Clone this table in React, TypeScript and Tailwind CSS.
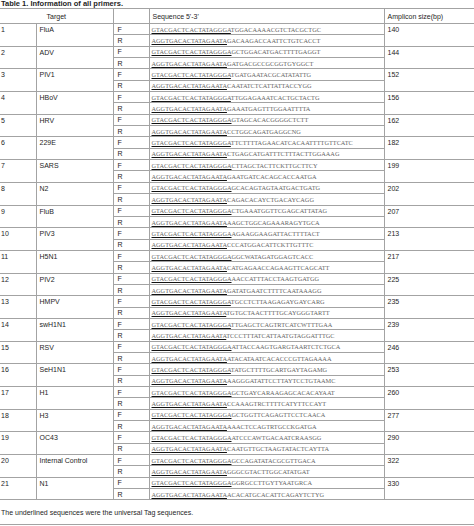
type Row = [string, string, string, string, string];

const rows: Row[] = [
  ["1", "FluA", "GTACGACTCACTATAGGGATGGACAAAACGTCTACGCTGC", "AGGTGACACTATAGAATAGACAAGACCAATTCTGTCACCT", "140"],
  ["2", "ADV", "GTACGACTCACTATAGGGAGCTGGACATGACTTTTGAGGT", "AGGTGACACTATAGAATAGATGACGCCGCGGTGYGGCT", "144"],
  ["3", "PIV1", "GTACGACTCACTATAGGGATGATGAATACGCATATATTG", "AGGTGACACTATAGAATACAATATCTCATTATTACCYGG", "152"],
  ["4", "HBoV", "GTACGACTCACTATAGGGATTGGAGAAATCACTGCTACTG", "AGGTGACACTATAGAATAGAAATGAGTTTGGAATTTTA", "156"],
  ["5", "HRV", "GTACGACTCACTATAGGGAGTAGCACACGGGGCTCTT", "AGGTGACACTATAGAATACCTGGCAGATGAGGCNG", "162"],
  ["6", "229E", "GTACGACTCACTATAGGGATTCTTTTAGAACATCACAATTTTGTTCATC", "AGGTGACACTATAGAATACTGAGCATGATTTCTTTACTTGGAAAG", "182"],
  ["7", "SARS", "GTACGACTCACTATAGGGACTTAGCTACTTCKTTGCTTCY", "AGGTGACACTATAGAATAGAATGATCACAGCACCAATGA", "199"],
  ["8", "N2", "GTACGACTCACTATAGGGAGCACAGTAGTAATGACTGATG", "AGGTGACACTATAGAATACAGACACAYCTGACAYCAGG", "202"],
  ["9", "FluB", "GTACGACTCACTATAGGGACTGAAATGGTTCGAGCATTATAG", "AGGTGACACTATAGAATAAAGCTGGCAGAAARAGYTGCA", "207"],
  ["10", "PIV3", "GTACGACTCACTATAGGGAAGAAGGAAGATTACTTTTACT", "AGGTGACACTATAGAATACCCATGGACATTCKTTGTTTC", "213"],
  ["11", "H5N1", "GTACGACTCACTATAGGGAGGCWATAGATGGAGTCACC", "AGGTGACACTATAGAATACATGAGAACCAGAAGTTCAGCATT", "217"],
  ["12", "PIV2", "GTACGACTCACTATAGGGAAACCATTTACCTAAGTGATGG", "AGGTGACACTATAGAATAGATATGAATCTTTTCAATAAAGG", "225"],
  ["13", "HMPV", "GTACGACTCACTATAGGGATGCCTCTTAAGAGAYGAYCARG", "AGGTGACACTATAGAATATGTGCTAACTTTTGCAYGGGTARTT", "235"],
  ["14", "swH1N1", "GTACGACTCACTATAGGGATTGAGCTCAGTRTCATCWTTTGAA", "AGGTGACACTATAGAATATCCCTTTATCATTAATGTAGGATTTGC", "239"],
  ["15", "RSV", "GTACGACTCACTATAGGGAATTACCAAGTGARGTAARTCTCTGCA", "AGGTGACACTATAGAATAATACATAATCACACCCGTTAGAAAA", "246"],
  ["16", "SeH1N1", "GTACGACTCACTATAGGGATATGCTTTTGCARTGAYTAGAMG", "AGGTGACACTATAGAATAAAGGGATATTCCTTAYTCCTGTAAMC", "253"],
  ["17", "H1", "GTACGACTCACTATAGGGAGCTGAYCARAAGAGCACACAYAAT", "AGGTGACACTATAGAATACCAAAGTRCTTTTCATYTTCCAYT", "260"],
  ["18", "H3", "GTACGACTCACTATAGGGAGCTGGTTCAGAGTTCCTCAACA", "AGGTGACACTATAGAATAAAACTCCAGTRTGCCKGATGA", "277"],
  ["19", "OC43", "GTACGACTCACTATAGGGAATCCCAWTGACAATCRAASGG", "AGGTGACACTATAGAATACAATGTTGCTAAGTATACTCAYTTA", "290"],
  ["20", "Internal Control", "GTACGACTCACTATAGGGAGCCAGATATACGCGTTGACA", "AGGTGACACTATAGAATAGGGCGTACTTGGCATATGAT", "322"],
  ["21", "N1", "GTACGACTCACTATAGGGAGGRGCCTTGYTYAATGRCA", "AGGTGACACTATAGAATAACACATGCACATTCAGAYTCTYG", "330"],
];

const sans = "font-['Liberation_Sans',Arial,sans-serif]";

function Seq({ s, n }: { s: string; n: number }) {
  return (
    <span className="font-['Liberation_Serif','Times_New_Roman',serif] text-[6.3px] text-[#666]">
      <span className="underline decoration-[#111] decoration-[1.2px] underline-offset-[1px]">
        {s.slice(0, n)}
      </span>
      {s.slice(n)}
    </span>
  );
}

export default function App() {
  const line = "border-[#a3a3a3]";
  return (
    <div className={`w-[474px] h-[526px] overflow-hidden bg-white ${sans} text-[#1e1e1e]`}>
      <div className="h-[8px] pl-[1px] text-[7.5px] leading-[8px] font-bold whitespace-nowrap">
        Table 1. Information of all primers.
      </div>
      <table className="border-collapse table-fixed w-[474px] text-[7px] leading-[9px]">
        <colgroup>
          <col className="w-[36px]" />
          <col className="w-[77px]" />
          <col className="w-[36px]" />
          <col className="w-[235px]" />
          <col className="w-[90px]" />
        </colgroup>
        <thead>
          <tr className="h-[15px]">
            <th colSpan={2} className={`border-t border-b border-r ${line} font-normal text-center align-middle`}>
              Target
            </th>
            <th className={`border-t border-b border-r ${line}`}></th>
            <th className={`border-t border-b border-r ${line} font-normal text-left pl-[3px] align-middle`}>
              Sequence 5'-3'
            </th>
            <th className={`border-t border-b ${line} font-normal text-left pl-[3px] align-middle`}>
              Amplicon size(bp)
            </th>
          </tr>
        </thead>
        <tbody>
          {rows.map(([num, name, f, r, size]) => (
            <>
              <tr key={num + "f"} className="h-[11.35px]">
                <td rowSpan={2} className={`border-b border-r ${line} align-top pl-[1px] pt-[1px]`}>
                  {num}
                </td>
                <td rowSpan={2} className={`border-b border-r ${line} align-top pl-[3px] pt-[1px] whitespace-nowrap`}>
                  {name}
                </td>
                <td className={`border-b border-r ${line} pl-[4px] align-middle`}>F</td>
                <td className={`border-b border-r ${line} pl-[2px] align-middle whitespace-nowrap overflow-hidden`}>
                  <Seq s={f} n={19} />
                </td>
                <td rowSpan={2} className={`border-b ${line} align-top pl-[3px] pt-[1px]`}>
                  {size}
                </td>
              </tr>
              <tr key={num + "r"} className="h-[11.35px]">
                <td className={`border-b border-r ${line} pl-[4px] align-middle`}>R</td>
                <td className={`border-b border-r ${line} pl-[2px] align-middle whitespace-nowrap overflow-hidden`}>
                  <Seq s={r} n={18} />
                </td>
              </tr>
            </>
          ))}
        </tbody>
      </table>
      <div className="pt-[8px] pl-[1px] text-[7px] leading-[9px] whitespace-nowrap">
        The underlined sequences were the universal Tag sequences.
      </div>
      <div className={`mt-[7px] border-t ${line}`}></div>
    </div>
  );
}
